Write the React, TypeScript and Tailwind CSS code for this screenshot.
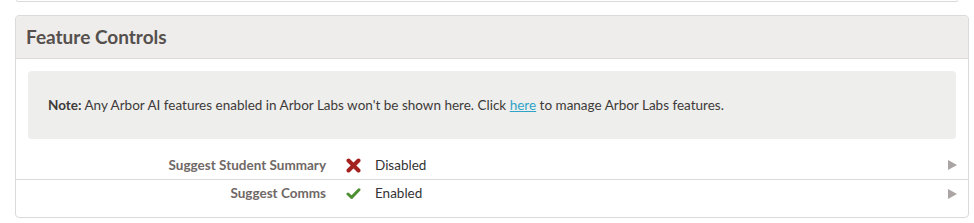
function Cross() {
  return (
    <svg width="15" height="15" viewBox="0 0 15 15" className="shrink-0">
      <path d="M2.5 2.5 L12.5 12.5 M12.5 2.5 L2.5 12.5" stroke="#a3221f" strokeWidth="4" strokeLinecap="round" />
    </svg>
  );
}

function Check() {
  return (
    <svg width="15" height="15" viewBox="0 0 15 15" className="shrink-0">
      <path d="M2 8 L5.6 11.4 L13 3.8" stroke="#4f8f33" strokeWidth="3" strokeLinecap="round" strokeLinejoin="round" fill="none" />
    </svg>
  );
}

function Arrow() {
  return (
    <svg width="9" height="10" viewBox="0 0 9 10">
      <path d="M0 0 L9 5 L0 10 Z" fill="#aaa5a3" />
    </svg>
  );
}

const rows = [
  { label: "Suggest Student Summary", enabled: false },
  { label: "Suggest Comms", enabled: true },
];

export default function App() {
  return (
    <div className="w-[974px] h-[223px] bg-white px-[15px] font-['Lato',sans-serif]">
      <div className="h-[2px] mx-px border-x border-b border-[#dcdad8] rounded-b" />
      <div className="mt-[13px] w-[954px] border border-[#dcdad8] rounded">
        <div className="h-[43px] bg-[#eeedeb] border-b border-[#dcdad8] rounded-t px-[10px] flex items-center">
          <h2 className="text-[19px] font-bold text-[#55504d] pt-px">Feature Controls</h2>
        </div>
        <div className="px-[12px] pt-[12px]">
          <div className="h-[68px] bg-[#eeeeec] rounded flex items-center px-[20px] text-[13.5px] text-[#3d3a39]">
            <p>
              <span className="font-bold">Note:</span> Any Arbor AI features enabled in Arbor Labs won't be shown here. Click{" "}
              <a href="#" className="text-[#2fa4c8] underline">
                here
              </a>{" "}
              to manage Arbor Labs features.
            </p>
          </div>
        </div>
        <div className="mt-[12px] pb-[10px]">
          {rows.map((r, i) => (
            <div
              key={r.label}
              className={`h-[28px] flex items-center text-[13.5px] ${i > 0 ? "border-t border-[#dcdad8]" : ""}`}
            >
              <div className="w-[310px] text-right font-bold text-[#6f6866]">{r.label}</div>
              <div className="ml-[20px] w-[15px] flex justify-center">{r.enabled ? <Check /> : <Cross />}</div>
              <div className="ml-[14px] flex-1 text-[#333]">{r.enabled ? "Enabled" : "Disabled"}</div>
              <div className="pr-[11px] flex items-center">
                <Arrow />
              </div>
            </div>
          ))}
        </div>
      </div>
    </div>
  );
}
